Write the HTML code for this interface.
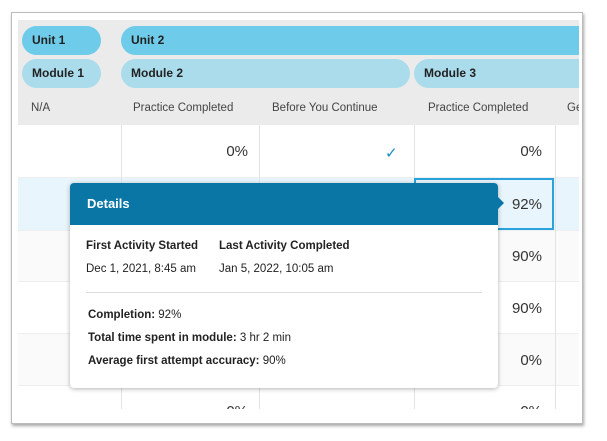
<!DOCTYPE html>
<html><head><style>
*{box-sizing:border-box;margin:0;padding:0}
body{width:607px;height:441px;background:#fff;font-family:"Liberation Sans",sans-serif;position:relative;overflow:hidden}
.frame{position:absolute;left:11px;top:12px;width:572px;height:412px;border:1px solid #bbb;box-shadow:1px 2px 3px rgba(0,0,0,.35);background:#fff}
.clip{position:absolute;left:18px;top:20px;width:561px;height:389px;overflow:hidden}
.hdr{position:absolute;left:0;top:0;width:561px;height:105px;background:#ebebeb}
.pill{position:absolute;height:29px;border-radius:15px;font-size:12px;font-weight:bold;color:#222;line-height:29px;padding-left:10px}
.u{background:#6ecbea}.m{background:#aadcec}
.ch{position:absolute;top:82px;font-size:11.5px;color:#444}
.row{position:absolute;left:0;width:561px;border-bottom:1px solid #eee}
.v{position:absolute;border-left:1px solid #e3e3e3;top:105px;height:290px}
.num{position:absolute;font-size:15px;color:#333;text-align:right}
.tip{position:absolute;left:70px;top:183px;width:428px;height:205px;background:#fff;border-radius:4px;box-shadow:0 1px 5px rgba(0,0,0,.3)}
.th{height:42px;background:#0a76a6;color:#fff;font-weight:bold;font-size:13px;line-height:42px;padding-left:17px;border-radius:4px 4px 0 0}
.t{position:absolute;font-size:11.5px;color:#222}
b{font-weight:bold}
</style></head><body>
<div class="frame"></div>
<div class="clip">
<div class="hdr"></div>
<div class="pill u" style="left:4px;top:6px;width:79px">Unit 1</div>
<div class="pill u" style="left:103px;top:6px;width:480px">Unit 2</div>
<div class="pill m" style="left:4px;top:39px;width:79px">Module 1</div>
<div class="pill m" style="left:103px;top:39px;width:289px">Module 2</div>
<div class="pill m" style="left:396px;top:39px;width:190px">Module 3</div>
<div class="ch" style="left:13px">N/A</div>
<div class="ch" style="left:115px">Practice Completed</div>
<div class="ch" style="left:254px">Before You Continue</div>
<div class="ch" style="left:410px">Practice Completed</div>
<div class="ch" style="left:549px">Ge</div>
<div class="row" style="top:105px;height:53px;background:#fff"></div>
<div class="row" style="top:158px;height:53px;background:#e8f5fc"></div>
<div class="row" style="top:211px;height:51px;background:#fafafa"></div>
<div class="row" style="top:262px;height:52px;background:#fff"></div>
<div class="row" style="top:314px;height:52px;background:#fafafa"></div>
<div class="v" style="left:103px"></div>
<div class="v" style="left:241px"></div>
<div class="v" style="left:396px"></div>
<div class="v" style="left:537px"></div>
<div class="num" style="left:150px;width:80px;top:123px">0%</div>
<div style="position:absolute;left:367px;top:124px;color:#1a8bc4;font-size:15px">✓</div>
<div class="num" style="left:444px;width:80px;top:123px">0%</div>
<div style="position:absolute;left:396px;top:158px;width:140px;height:52px;border:2px solid #2aa3dc"></div>
<div class="num" style="left:444px;width:80px;top:176px">92%</div>
<div class="num" style="left:444px;width:80px;top:228px">90%</div>
<div class="num" style="left:444px;width:80px;top:280px">90%</div>
<div class="num" style="left:444px;width:80px;top:332px">0%</div>
<div class="num" style="left:150px;width:80px;top:383px">0%</div>
<div class="num" style="left:444px;width:80px;top:383px">0%</div>
</div>
<div class="tip">
<div class="th">Details</div>
<div style="position:absolute;right:-6px;top:13px;width:0;height:0;border-top:7px solid transparent;border-bottom:7px solid transparent;border-left:7px solid #0a76a6"></div>
<div class="t" style="left:16px;top:57px"><b>First Activity Started</b></div>
<div class="t" style="left:149px;top:57px"><b>Last Activity Completed</b></div>
<div class="t" style="left:16px;top:80px">Dec 1, 2021, 8:45 am</div>
<div class="t" style="left:149px;top:80px">Jan 5, 2022, 10:05 am</div>
<div style="position:absolute;left:16px;top:109px;width:396px;border-top:1px solid #ddd"></div>
<div class="t" style="left:18px;top:126px"><b>Completion:</b> 92%</div>
<div class="t" style="left:18px;top:149px"><b>Total time spent in module:</b> 3 hr 2 min</div>
<div class="t" style="left:18px;top:172px"><b>Average first attempt accuracy:</b> 90%</div>
</div>
</body></html>
